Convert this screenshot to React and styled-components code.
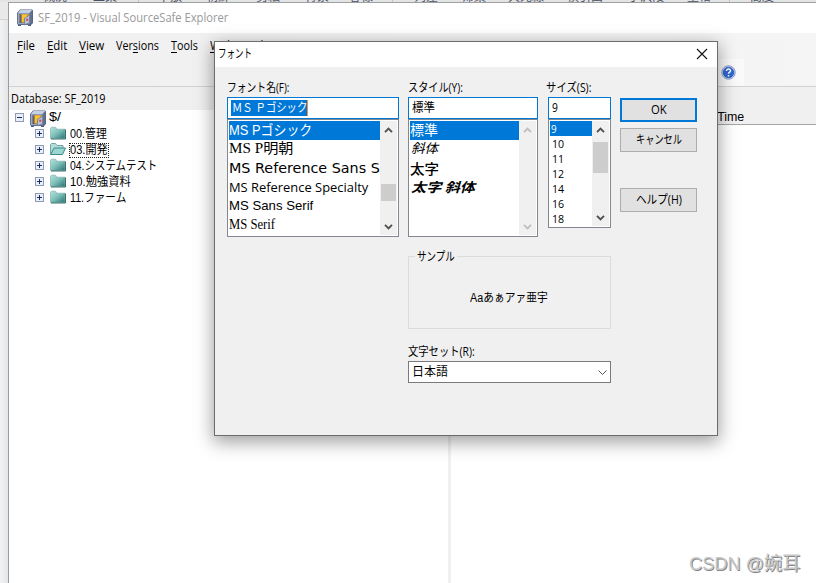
import React, { useLayoutEffect, useRef, useState } from 'react';
import styled, { createGlobalStyle, css } from 'styled-components';

const ui = '"Open Sans", "Noto Sans CJK JP", sans-serif';
const gothic = '"Liberation Sans", "Noto Sans CJK JP", sans-serif';

const Global = createGlobalStyle`
  * { box-sizing: border-box; }
  body { margin: 0; overflow: hidden; background: #f1f2f3; }
`;

/* Text squeezed or stretched to a given advance width */
const FitBox = styled.span`
  display: block;
  flex: none;
  width: ${p => p.$w}px;
  height: ${p => p.$h || 16}px;
  line-height: ${p => p.$h || 16}px;
  white-space: pre;
  font-family: ${p => p.$font || ui};
  font-size: ${p => p.$size || 12}px;
  font-weight: ${p => p.$weight || 400};
  font-style: ${p => (p.$italic ? 'italic' : 'normal')};
  color: ${p => p.$color || '#000'};
  margin: ${p => p.$m || 0};
`;
const FitInner = styled.span`
  display: inline-block;
  transform-origin: 0 50%;
  u { text-underline-offset: 2px; text-decoration-thickness: 1px; }
`;
function Fit({ w, h, size, font, weight, italic, color, m, children }) {
  const ref = useRef(null);
  const [scale, setScale] = useState(1);
  useLayoutEffect(() => {
    const measure = () => ref.current && setScale(w / ref.current.offsetWidth);
    measure();
    document.fonts.ready.then(measure);
  }, [w]);
  return (
    <FitBox $w={w} $h={h} $size={size} $font={font} $weight={weight} $italic={italic} $color={color} $m={m}>
      <FitInner ref={ref} style={{ transform: `scaleX(${scale})` }}>{children}</FitInner>
    </FitBox>
  );
}

const Desktop = styled.div`
  position: relative;
  width: 816px;
  height: 583px;
  overflow: hidden;
  display: grid;
  grid-template-columns: 8px 808px;
  grid-template-rows: 2px 581px;
  background: #f1f2f3;
`;
const Ribbon = styled.div`
  grid-column: 1 / 3;
  background: #e3e4e4;
  overflow: hidden;
  position: relative;
`;
const RibbonItem = styled.span`
  position: absolute;
  left: ${p => p.$x}px;
  bottom: -2px;
  font: 12px/14px ${gothic};
  color: #4b5166;
  white-space: nowrap;
`;
const RibbonRule = styled.i`
  position: absolute;
  left: ${p => p.$x}px;
  top: 0;
  width: 1px;
  height: 2px;
  background: #c4c4c4;
`;
const Gutter = styled.div`
  background: linear-gradient(90deg, #f2f3f5, #e4e5e7);
  &::before { content: ''; display: block; height: 17px; background: #e9e9e9; border-bottom: 1px solid #d3d4d5; }
`;
const Window = styled.div`
  border-left: 1px solid #9c9c9c;
  border-top: 1px solid #a0a0a0;
  background: #fff;
  display: flex;
  flex-direction: column;
`;
const TitleBar = styled.div`
  height: 30px;
  padding-left: 8px;
  display: flex;
  align-items: center;
  background: #fff;
  > svg { margin-top: -2px; }
`;
const MenuArea = styled.div`
  height: 54px;
  border-bottom: 1px solid #d2d2d2;
  background: linear-gradient(90deg, #f0f0f0, #f5f5f5);
  display: flex;
  justify-content: space-between;
`;
const Menus = styled.div`
  display: flex;
  padding: 5px 0 0 8px;
`;
const ToolEnd = styled.div`
  width: 40px;
  height: 27px;
  margin: 26px 72px 0 0;
  background: #f9f9f9;
  padding: 6px 0 0 17px;
  svg { display: block; }
`;
const Panes = styled.div`
  flex: 1;
  display: grid;
  grid-template-columns: 439px 3px 1fr;
`;
const Splitter = styled.div`background: #f0f0f0;`;
const DatabaseBar = styled.div`
  height: 23px;
  background: #f0f0f0;
  padding: 4px 0 0 2px;
`;
const ListHeader = styled.div`
  height: 38px;
  border-bottom: 1px solid #a5a5a5;
  background: #f0f0f0;
  padding: 22px 0 0 262px;
`;
const TreeRow = styled.div`
  display: flex;
  align-items: center;
  height: 16px;
  padding-left: ${p => (p.$root ? 6 : 26)}px;
  > svg { flex: none; margin-top: ${p => (p.$root ? 0 : -2)}px; }
`;
const Toggle = styled.svg`
  margin-right: ${p => (p.$root ? 6 : 6)}px;
  position: relative;
  top: ${p => (p.$root ? -1 : 0)}px;
`;
const Focus = styled.div`
  margin-left: 3px;
  height: 15px;
  display: flex;
  align-items: center;
  border: 1px dotted ${p => (p.$on ? '#222' : 'transparent')};
`;

const Dialog = styled.div`
  position: absolute;
  left: 214px;
  top: 41px;
  width: 504px;
  height: 395px;
  border: 1px solid #6c6c6c;
  background: #f0f0f0;
  box-shadow: 0 5px 17px 1px rgba(0, 0, 0, 0.38);
`;
const DialogTitle = styled.div`
  height: 25px;
  background: #fff;
  display: flex;
  justify-content: space-between;
  padding: 4px 9px 0 3px;
`;
const DialogBody = styled.div`
  padding: 12px 20px 0 12px;
  display: grid;
  grid-template-columns: 181px 140px 72px 77px;
  grid-template-rows: 177px 1fr;
`;
const Field = styled.div`
  display: flex;
  flex-direction: column;
  width: ${p => p.$width}px;
`;
const Label = styled.div`
  height: 18px;
  padding-top: 1px;
`;
const TextInput = styled.div`
  height: 22px;
  border: 1px solid #0078d7;
  background: #fff;
  padding: 2px 0 0 ${p => (p.$selected ? 3 : 3)}px;
`;
const Selection = styled.div`
  width: 77px;
  height: 16px;
  background: #0078d7;
  border-right: 1px solid #ff8a28;
`;
const ListBox = styled.div`
  height: ${p => p.$height}px;
  border: 1px solid #828790;
  background: #fff;
  padding: 1px;
  display: flex;
`;
const Options = styled.div`
  flex: 1;
  min-width: 0;
  overflow: hidden;
`;
const Option = styled.div`
  height: ${p => p.$height}px;
  display: flex;
  align-items: center;
  padding-left: ${p => p.$indent ?? 0}px;
  padding-bottom: ${p => (p.$height > 15 ? 2 : 0)}px;
  ${p => p.$on && css`background: #0078d7;`}
`;
const ScrollTrack = styled.div`
  width: 17px;
  background: #f0f0f0;
  display: flex;
  flex-direction: column;
  align-items: center;
  svg { flex: none; }
`;
const Thumb = styled.div`
  width: 15px;
  height: ${p => p.$height}px;
  margin-top: ${p => p.$offset}px;
  margin-bottom: auto;
  background: #cdcdcd;
`;
const Buttons = styled.div`
  padding-top: 19px;
  width: 77px;
`;
const Button = styled.div`
  height: 24px;
  margin-bottom: ${p => p.$gap || 0}px;
  background: #e1e1e1;
  border: ${p => (p.$primary ? '2px solid #0078d7' : '1px solid #adadad')};
  display: flex;
  align-items: center;
  justify-content: center;
`;
const Lower = styled.div`
  grid-column: 2 / 4;
  width: 203px;
`;
const Group = styled.div`
  height: 73px;
  border: 1px solid #dcdcdc;
  display: flex;
  flex-direction: column;
  align-items: flex-start;
`;
const Legend = styled.div`
  margin: -8px 0 0 6px;
  padding: 0 2px;
  background: #f0f0f0;
`;
const Combo = styled.div`
  height: 22px;
  border: 1px solid #7a7a7a;
  background: #fff;
  display: flex;
  align-items: center;
  justify-content: space-between;
  padding: 0 3px;
`;
const Watermark = styled.div`
  position: absolute;
  left: 689px;
  top: 551px;
  text-shadow: 1px 1px 0 #858585;
`;

const Chevron = ({ up, dim }) => (
  <svg width="17" height="17" viewBox="0 0 17 17">
    <path d={up ? 'M5 11.2 8.5 7.7 12 11.2' : 'M5 6.8 8.5 10.3 12 6.8'} fill="none" stroke={dim ? '#bfbfbf' : '#505050'} strokeWidth="1.9" />
  </svg>
);
const Scroll = ({ dim, height, offset }) => (
  <ScrollTrack><Chevron up dim={dim} /><Thumb $height={height} $offset={offset} /><Chevron dim={dim} /></ScrollTrack>
);

const Safe = () => (
  <svg width="16" height="17" viewBox="0 0 16 17">
    <path d="M0 4 3 .5h12l1 1V14l-2 2v1h-3v-1H4v1H1v-1.5L0 15z" fill="#525e80" />
    <path d="M.8 4 3.4 1h11.8L12.6 4z" fill="#c5d0e3" />
    <path d="M.7 4.2h12v11H.7z" fill="#9aabc8" />
    <path d="M12.7 4.2 15.4 1.5V13.4l-2.7 2z" fill="#64728f" />
    <path d="M2.5 5.3h9.2V14H2.5z" fill="#c98d20" />
    <path d="M2.5 5.3h2.2V14H2.5z" fill="#59627d" />
    <path d="M4.7 5.6h5.6v2.6L7 9.6V13H4.7z" fill="#ffc229" />
    <path d="M7.4 9.4 12.6 6v7.8l-5.2 2z" fill="#b6c2d9" stroke="#626e91" strokeWidth=".7" />
    <circle cx="10.2" cy="10.8" r="1.2" fill="#d8543e" />
  </svg>
);
const Expander = ({ open }) => (
  <Toggle $root={open} width="9" height="9" viewBox="0 0 9 9" shapeRendering="crispEdges">
    <rect x=".5" y=".5" width="8" height="8" fill="#e9eef8" stroke="#8e9cb6" />
    <path d={open ? 'M2 4.5h5' : 'M2 4.5h5M4.5 2v5'} stroke="#172f65" />
  </Toggle>
);
const Folder = ({ open }) => (
  <svg width="16" height="14" viewBox="0 0 16 14">
    <defs>
      <linearGradient id="folder" x1="0" y1="0" x2="1" y2="1">
        <stop offset="0" stopColor="#b9e3df" /><stop offset=".5" stopColor="#7dbdb8" /><stop offset="1" stopColor="#28736f" />
      </linearGradient>
    </defs>
    {open ? (
      <>
        <path d="M.5 12.5V2.5l1-1h4l1.5 2h6v3" fill="#b5dcda" stroke="#6da9a5" />
        <path d="M.7 12.5 4 6h11.5l-3 6.5z" fill="#9bd6d0" stroke="#3c8b86" />
      </>
    ) : (
      <>
        <path d="M.5 12.5V2.2l1-1h4l1.2 2H15v9.3z" fill="url(#folder)" stroke="#7db1ae" strokeWidth=".7" />
        <path d="M15.5 3.5V13H1" fill="none" stroke="#28615e" strokeWidth=".9" />
      </>
    )}
  </svg>
);
const Help = () => (
  <svg width="15" height="15" viewBox="0 0 15 15">
    <circle cx="7.5" cy="7.5" r="6.7" fill="#dbe7f8" stroke="#6386c5" strokeWidth=".8" />
    <circle cx="7.5" cy="7.5" r="5.3" fill="#2f67d6" stroke="#17429f" strokeWidth=".6" />
    <path d="M5.5 6c0-2.7 4.2-2.4 4 0-.1 1.3-2 1.2-2 2.7M7.5 10v1.4" fill="none" stroke="#fff" strokeWidth="1.5" />
  </svg>
);

const ribbon = [[43, '概況'], [93, '工業'], [158, '下'], [170, '敷'], [206, '朝鮮'], [256, '勢絵'], [305, '背景'], [349, '客様'], [414, '列差'], [462, '帰葉'], [508, '火光線'], [567, '横引出'], [628, '小沢段'], [687, '重格'], [750, '高度']];
const folders = [['00.管理', 37], ['03.開発', 38, true], ['04.システムテスト', 87], ['10.勉強資料', 61], ['11.ファーム', 56]];
const menus = [['F', 'ile', '', 18], ['E', 'dit', '', 20], ['V', 'iew', '', 25], ['s', 'ions', 'Ver', 43], ['T', 'ools', '', 27], ['W', 'eb', '', 24], ['H', 'elp', '', 24]];
const fonts = [['MS Pゴシック', 83, gothic, 14], ['MS P明朝', 65, '"Liberation Serif", "Noto Sans CJK JP", serif', 14], ['MS Reference Sans Serif', 175, '"DejaVu Sans", sans-serif', 14], ['MS Reference Specialty', 139, ui, 13], ['MS Sans Serif', 84, gothic, 13.5], ['MS Serif', 46, '"Liberation Serif", serif', 14]];

export default function App() {
  return (
    <Desktop>
      <Global />
      <Ribbon>
        {ribbon.map(([x, t]) => <RibbonItem key={x} $x={x}>{t}</RibbonItem>)}
        {[138, 392, 729].map(x => <RibbonRule key={x} $x={x} />)}
      </Ribbon>
      <Gutter />
      <Window>
        <TitleBar><Safe /><Fit w={190} m="0 0 0 5px" color="#999">SF_2019 - Visual SourceSafe Explorer</Fit></TitleBar>
        <MenuArea>
          <Menus>{menus.map(([u, after, before, w]) => <Fit key={u + after} w={w} m="0 12px 0 0">{before}<u>{u}</u>{after}</Fit>)}</Menus>
          <ToolEnd><Help /></ToolEnd>
        </MenuArea>
        <Panes>
          <div>
            <DatabaseBar><Fit w={95}>Database: SF_2019</Fit></DatabaseBar>
            <TreeRow $root><Expander open /><Safe /><Fit w={12} size={12} font={gothic} m="0 0 2px 3px">$/</Fit></TreeRow>
            {folders.map(([name, w, open]) => (
              <TreeRow key={name}><Expander /><Folder open={open} /><Focus $on={open}><Fit w={w} h={15} font={gothic}>{name}</Fit></Focus></TreeRow>
            ))}
          </div>
          <Splitter />
          <ListHeader><Fit w={31} font={gothic}>-Time</Fit></ListHeader>
        </Panes>
      </Window>

      <Dialog>
        <DialogTitle>
          <Fit w={34}>フォント</Fit>
          <svg width="12" height="16" viewBox="0 0 12 16"><path d="m1 3 10 10M11 3 1 13" fill="none" stroke="#111" strokeWidth="1.1" /></svg>
        </DialogTitle>
        <DialogBody>
          <Field $width={172}>
            <Label><Fit w={62}>フォント名(F):</Fit></Label>
            <TextInput $selected><Selection><Fit w={75} color="#fff" font={gothic} m="0 0 0 1px">ＭＳ Ｐゴシック</Fit></Selection></TextInput>
            <ListBox $height={118}>
              <Options>{fonts.map(([t, w, f, s], i) => <Option key={t} $height={19} $on={i === 0}><Fit w={w} font={f} size={s} color={i === 0 ? '#fff' : '#000'}>{t}</Fit></Option>)}</Options>
              <Scroll height={17} offset={46} />
            </ListBox>
          </Field>
          <Field $width={130}>
            <Label><Fit w={55}>スタイル(Y):</Fit></Label>
            <TextInput><Fit w={23}>標準</Fit></TextInput>
            <ListBox $height={118}>
              <Options>
                <Option $height={19} $on><Fit w={28} size={14} color="#fff" font={gothic}>標準</Fit></Option>
                <Option $height={19} $indent={1}><Fit w={27} size={13} italic font={gothic}>斜体</Fit></Option>
                <Option $height={19}><Fit w={29} size={14} weight={500} font={'"Noto Sans CJK JP", sans-serif'}>太字</Fit></Option>
                <Option $height={19} $indent={1}><Fit w={64} size={13} italic weight={700} font={'"Noto Sans CJK JP", sans-serif'}>太字 斜体</Fit></Option>
              </Options>
              <Scroll dim height={0} offset={0} />
            </ListBox>
          </Field>
          <Field $width={63}>
            <Label><Fit w={45} m="0 0 0 -2px">サイズ(S):</Fit></Label>
            <TextInput><Fit w={6}>9</Fit></TextInput>
            <ListBox $height={109}>
              <Options>{[9, 10, 11, 12, 14, 16, 18].map((n, i) => <Option key={n} $height={15} $on={i === 0} $indent={i === 0 ? 1 : 2}><Fit w={i === 0 ? 6 : 12} size={11.5} h={15} color={i === 0 ? '#fff' : '#000'}>{n}</Fit></Option>)}</Options>
              <Scroll height={31} offset={4} />
            </ListBox>
          </Field>
          <Buttons>
            <Button $primary $gap={6}><Fit w={16}>OK</Fit></Button>
            <Button $gap={36}><Fit w={46}>キャンセル</Fit></Button>
            <Button><Fit w={46}>ヘルプ(H)</Fit></Button>
          </Buttons>
          <Lower>
            <Group>
              <Legend><Fit w={38}>サンプル</Fit></Legend>
              <Fit w={78} font={gothic} m="25px 0 0 61px">Aaあぁアァ亜宇</Fit>
            </Group>
            <Fit w={67} m="15px 0 1px">文字セット(R):</Fit>
            <Combo><Fit w={36}>日本語</Fit><svg width="9" height="7" viewBox="0 0 9 7"><path d="m.5 1.5 4 4 4-4" fill="none" stroke="#555" /></svg></Combo>
          </Lower>
        </DialogBody>
      </Dialog>
      <Watermark><Fit w={111} h={26} size={19} color="#c8c8c8" font={gothic}>CSDN @婉耳</Fit></Watermark>
    </Desktop>
  );
}
